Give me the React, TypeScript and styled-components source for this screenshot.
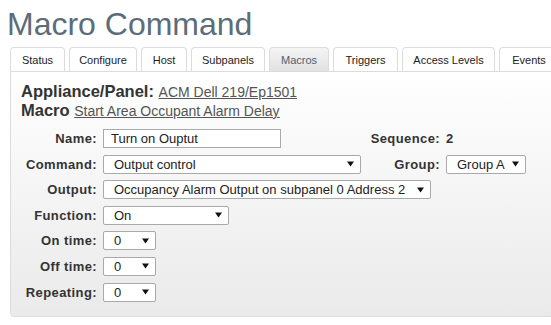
import styled, { createGlobalStyle } from "styled-components";

const GlobalStyle = createGlobalStyle`
  body {
    margin: 0;
    background: #fff;
    overflow: hidden;
    font-family: "Liberation Sans", Arial, sans-serif;
  }
`;

const Page = styled.div`
  padding: 6px 0 0 10px;
  width: 560px;
`;

const Title = styled.h1`
  margin: 0 0 5px -3px;
  font-size: 32px;
  line-height: 36px;
  font-weight: normal;
  color: #5d6c79;
  white-space: nowrap;
`;

const TabBar = styled.ul`
  list-style: none;
  margin: 0;
  padding: 0;
  display: flex;
  gap: 4px;
`;

const Tab = styled.li<{ $active?: boolean; $w: number }>`
  flex-shrink: 0;
  box-sizing: border-box;
  width: ${(p) => p.$w}px;
  height: 24px;
  padding: 2px 0 0;
  line-height: 21px;
  font-size: 11px;
  text-align: center;
  white-space: nowrap;
  border: 1px solid #dcdcdc;
  border-bottom: none;
  border-radius: 4px 4px 0 0;
  color: ${(p) => (p.$active ? "#4f6070" : "#222")};
  background: ${(p) =>
    p.$active ? "linear-gradient(#f4f4f4, #e2e2e2)" : "#fff"};
`;

const Panel = styled.div`
  border: 1px solid #dcdcdc;
  border-radius: 0 0 4px 4px;
  background: linear-gradient(#fff, #eaeaea);
  padding: 10px 10px 14px;
`;

const InfoLine = styled.div`
  font-size: 16.5px;
  line-height: 18px;
  font-weight: bold;
  color: #333;
  white-space: nowrap;
`;

const InfoLink = styled.a`
  font-size: 14px;
  font-weight: normal;
  color: #555;
  text-decoration: underline;
`;

const FormGrid = styled.div`
  margin-top: 9px;
  display: grid;
  grid-template-columns: 76px 259px 72px auto;
  column-gap: 6px;
  row-gap: 6.6px;
  align-items: center;
`;

const Label = styled.label`
  text-align: right;
  font-size: 13px;
  font-weight: bold;
  letter-spacing: 0.4px;
  color: #333;
  white-space: nowrap;
`;

const Value = styled.span`
  font-size: 13px;
  font-weight: bold;
  letter-spacing: 0.4px;
  color: #333;
`;

const TextInput = styled.input<{ $w: number }>`
  box-sizing: border-box;
  width: ${(p) => p.$w}px;
  height: 19px;
  margin: 0;
  padding: 0 7px;
  border: 1px solid #a9a9a9;
  background: #fff;
  font-family: "Liberation Sans", Arial, sans-serif;
  font-size: 13px;
  color: #222;
  outline: none;
`;

const SelectBox = styled.div<{ $w: number; $span?: boolean }>`
  box-sizing: border-box;
  width: ${(p) => p.$w}px;
  height: 19px;
  padding: 0 6px 0 10px;
  border: 1px solid #a9a9a9;
  border-radius: 2px;
  background: #fff;
  display: flex;
  align-items: center;
  justify-content: space-between;
  font-size: 13px;
  color: #222;
  white-space: nowrap;
  grid-column: ${(p) => (p.$span ? "2 / 5" : "auto")};
`;

const Arrow = () => (
  <svg width="7" height="6" viewBox="0 0 7 6">
    <path d="M0 0.5 H7 L3.5 5.5 Z" fill="#111" />
  </svg>
);

const Select = ({
  value,
  width,
  span,
}: {
  value: string;
  width: number;
  span?: boolean;
}) => (
  <SelectBox $w={width} $span={span}>
    <span>{value}</span>
    <Arrow />
  </SelectBox>
);

const tabs = [
  { name: "Status", width: 55 },
  { name: "Configure", width: 68 },
  { name: "Host", width: 46 },
  { name: "Subpanels", width: 74 },
  { name: "Macros", width: 60 },
  { name: "Triggers", width: 65 },
  { name: "Access Levels", width: 93 },
  { name: "Events", width: 60 },
];

const App = () => {
  return (
    <Page>
      <GlobalStyle />
      <Title>Macro Command</Title>
      <TabBar>
        {tabs.map((t) => (
          <Tab key={t.name} $w={t.width} $active={t.name === "Macros"}>
            {t.name}
          </Tab>
        ))}
      </TabBar>
      <Panel>
        <InfoLine>
          Appliance/Panel: <InfoLink href="#">ACM Dell 219/Ep1501</InfoLink>
        </InfoLine>
        <InfoLine>
          Macro <InfoLink href="#">Start Area Occupant Alarm Delay</InfoLink>
        </InfoLine>
        <FormGrid>
          <Label>Name:</Label>
          <TextInput $w={178} value="Turn on Ouptut" readOnly />
          <Label>Sequence:</Label>
          <Value>2</Value>

          <Label>Command:</Label>
          <Select value="Output control" width={258} />
          <Label>Group:</Label>
          <Select value="Group A" width={80} />

          <Label>Output:</Label>
          <Select
            value="Occupancy Alarm Output on subpanel 0 Address 2"
            width={328}
            span
          />

          <Label>Function:</Label>
          <Select value="On" width={126} span />

          <Label>On time:</Label>
          <Select value="0" width={53} span />

          <Label>Off time:</Label>
          <Select value="0" width={53} span />

          <Label>Repeating:</Label>
          <Select value="0" width={53} span />
        </FormGrid>
      </Panel>
    </Page>
  );
};

export default App;
